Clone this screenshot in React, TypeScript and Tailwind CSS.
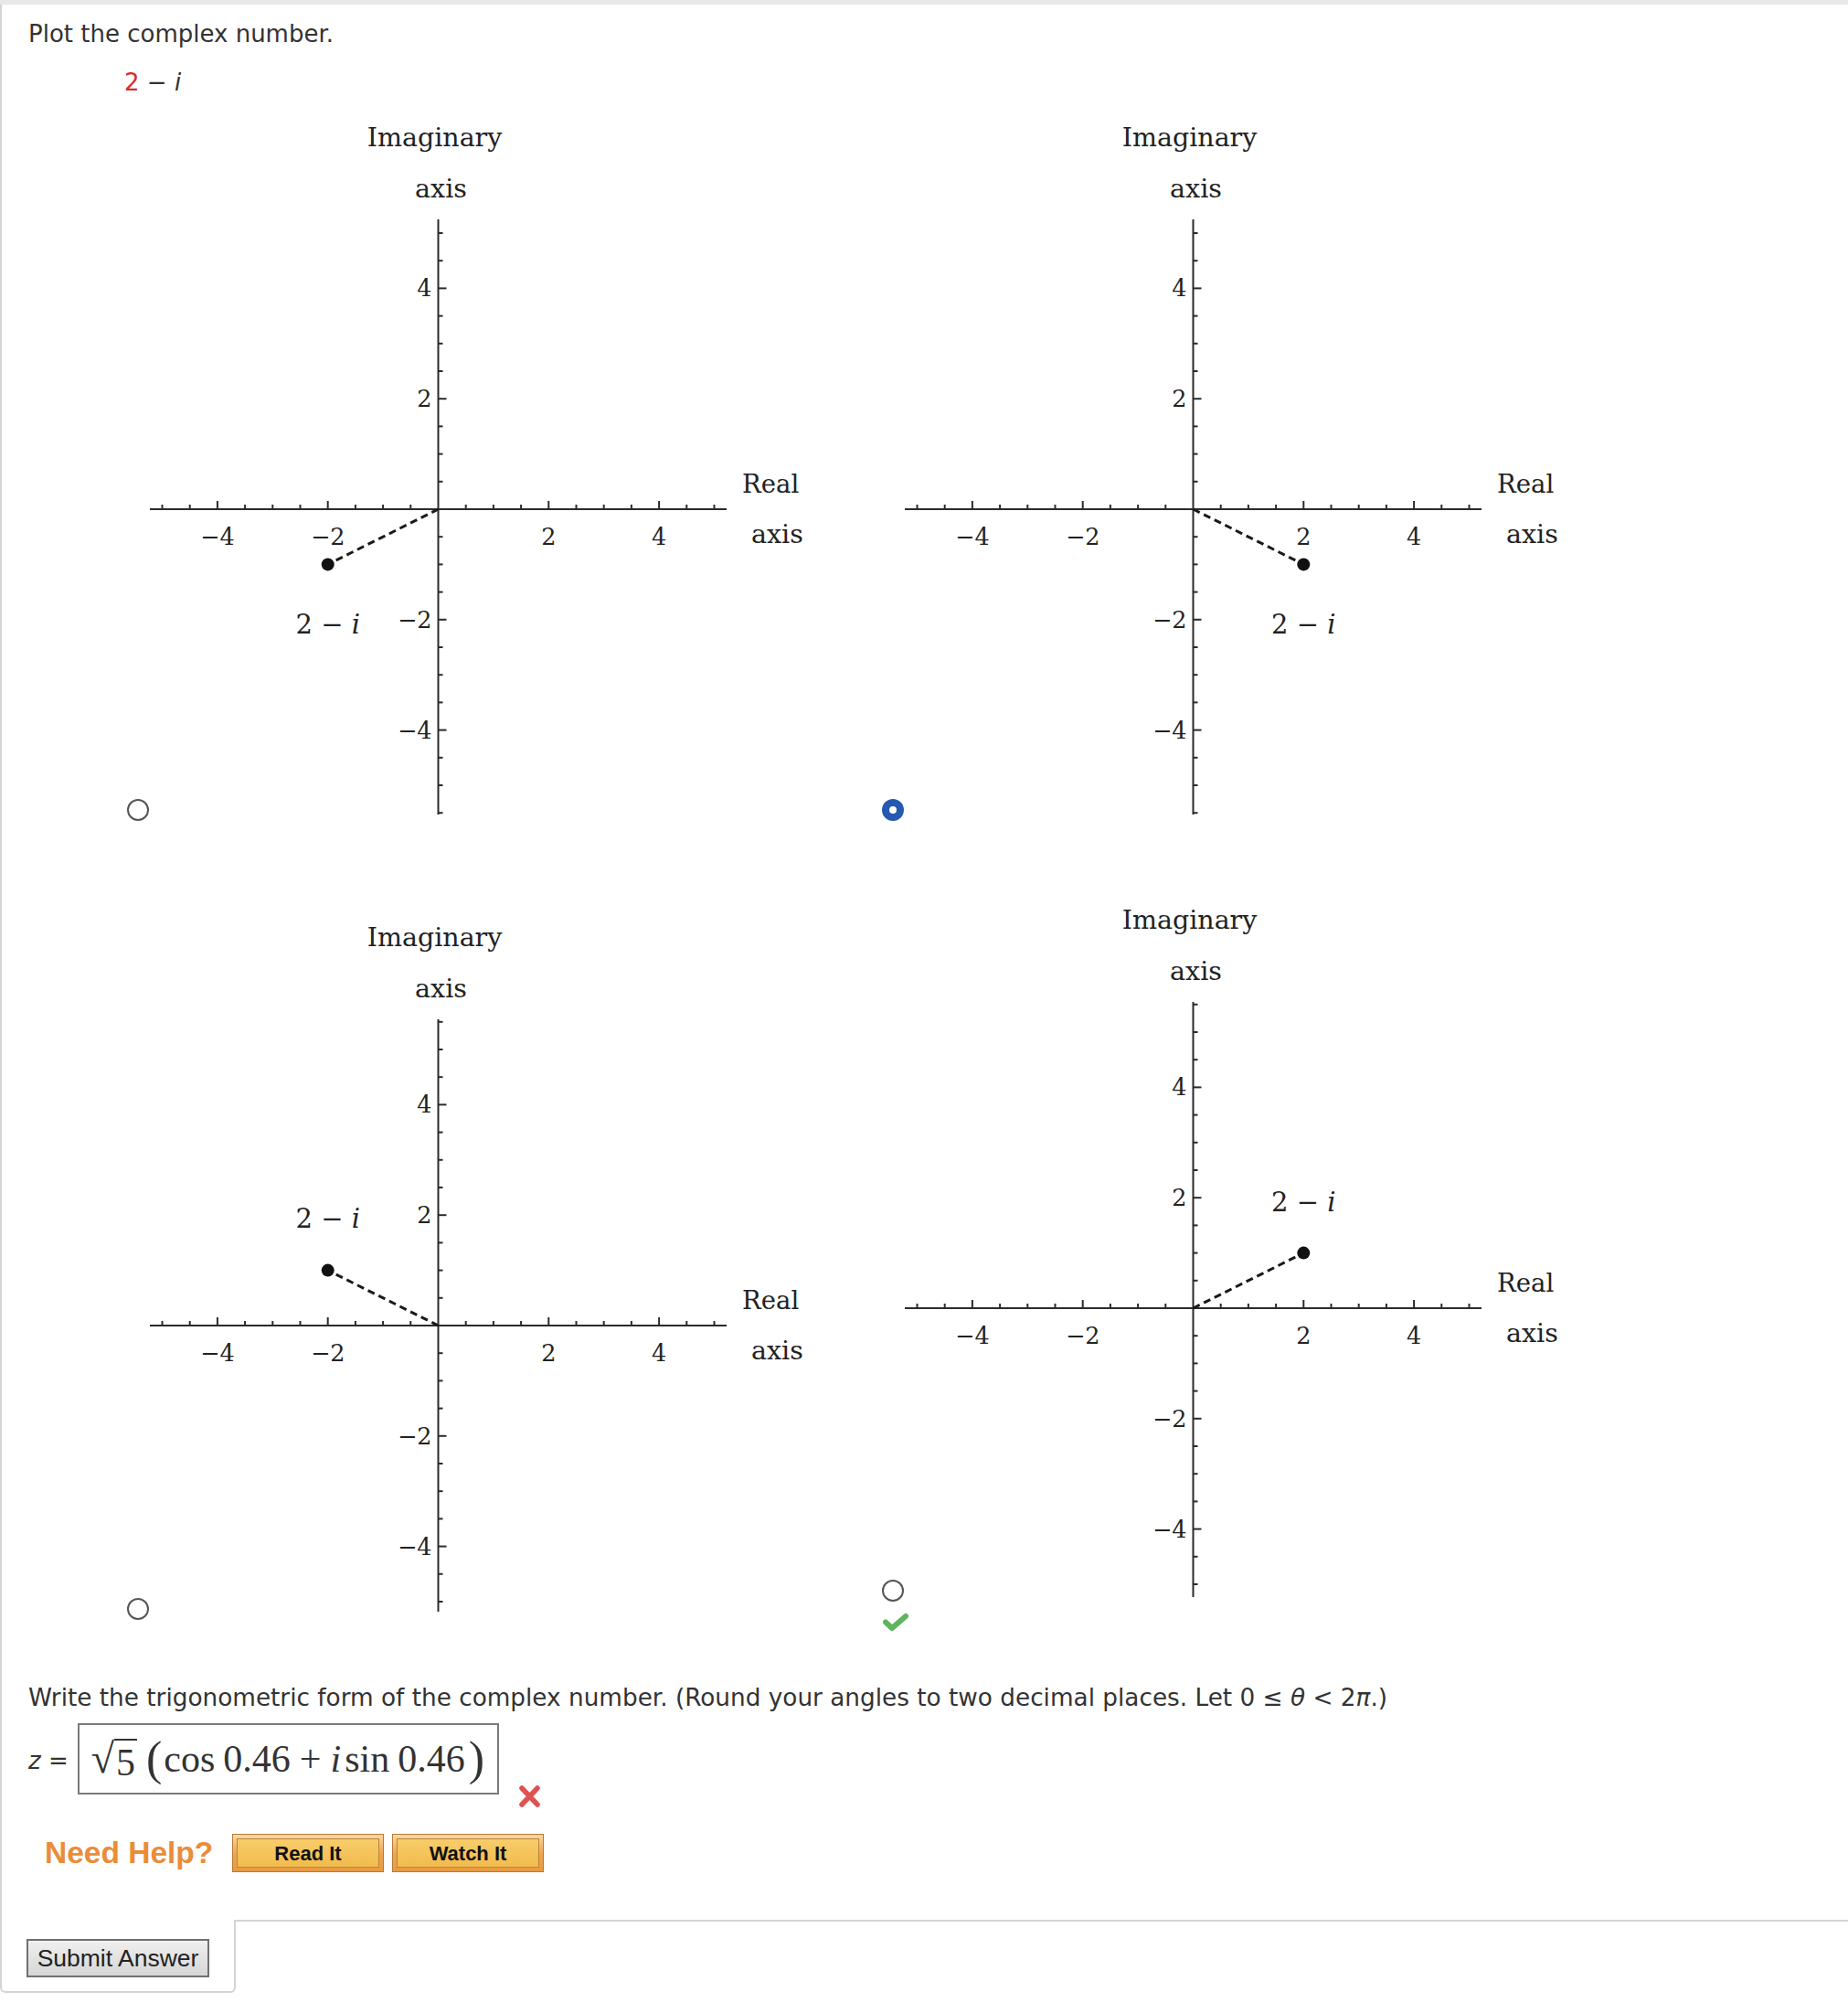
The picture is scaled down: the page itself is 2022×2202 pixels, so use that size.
import React from 'react';

const U = 60.4;

type GraphProps = {
  w: number;
  h: number;
  ox: number;
  oy: number;
  up: number;
  down: number;
  pt: [number, number];
  labelDy: number;
};

const fmt = (v: number) => (v < 0 ? `\u2212${-v}` : `${v}`);

function Graph({ w, h, ox, oy, up, down, pt, labelDy }: GraphProps) {
  const ticks: React.ReactNode[] = [];
  for (let k = -10; k <= 10; k++) {
    if (k === 0) continue;
    const x = ox + (k * U) / 2;
    const len = k % 4 === 0 ? 9 : 5;
    ticks.push(<line key={'x' + k} x1={x} x2={x} y1={oy} y2={oy - len} />);
  }
  for (let k = -12; k <= 12; k++) {
    if (k === 0) continue;
    const y = oy - (k * U) / 2;
    if (y < oy - up + 2 || y > oy + down - 1) continue;
    const len = k % 4 === 0 ? 9 : 5;
    ticks.push(<line key={'y' + k} x1={ox} x2={ox + len} y1={y} y2={y} />);
  }
  const X = ox + pt[0] * U;
  const Y = oy - pt[1] * U;
  const marks = [-4, -2, 2, 4];

  return (
    <svg width={w} height={h} viewBox={`0 0 ${w} ${h}`} className="block shrink-0">
      <g stroke="#2b2b2b" strokeWidth={2}>
        <line x1={ox - 315.5} x2={ox + 315.5} y1={oy} y2={oy} />
        <line x1={ox} x2={ox} y1={oy - up} y2={oy + down} />
        {ticks}
      </g>
      <line x1={ox} y1={oy} x2={X} y2={Y} stroke="#1a1a1a" strokeWidth={3} strokeDasharray="8 5" />
      <circle cx={X} cy={Y} r={7} fill="#111" />
      <g fontFamily="'DejaVu Serif', serif" fill="#222">
        <text x={ox - 4} y={oy - up - 80} fontSize={28.5} textAnchor="middle">Imaginary</text>
        <text x={ox + 3} y={oy - up - 24} fontSize={28.5} textAnchor="middle">axis</text>
        <text x={ox + 332.5} y={oy - 18} fontSize={27.5}>Real</text>
        <text x={ox + 342.5} y={oy + 37} fontSize={28.5}>axis</text>
        {marks.map((v) => (
          <text key={'lx' + v} x={ox + v * U} y={oy + 39} fontSize={25.5} textAnchor="middle">
            {fmt(v)}
          </text>
        ))}
        {marks.map((v) => (
          <text key={'ly' + v} x={ox - 7} y={oy - v * U + 9} fontSize={25.5} textAnchor="end">
            {fmt(v)}
          </text>
        ))}
        <text x={X} y={Y + labelDy} fontSize={29} textAnchor="middle">
          2 {'\u2212'} <tspan fontStyle="italic">i</tspan>
        </text>
      </g>
    </svg>
  );
}

function Radio({ checked = false }: { checked?: boolean }) {
  if (checked) {
    return (
      <span className="flex h-6 w-6 items-center justify-center rounded-full bg-[#2659b0]">
        <span className="h-2 w-2 rounded-full bg-white" />
      </span>
    );
  }
  return <span className="block h-6 w-6 rounded-full border-[2.5px] border-[#555] bg-white" />;
}

function HelpButton({ label }: { label: string }) {
  return (
    <button className="h-[42px] w-[166px] border border-[#b67a37] bg-linear-to-b from-[#fbd9a0] via-[#eea650] to-[#e99a40] p-[4px]">
      <span className="flex h-full w-full items-center justify-center border border-[#b98640] bg-linear-to-b from-[#f7cd6a] to-[#f2bb4c] font-['Liberation_Sans',sans-serif] text-[22px] font-bold text-[#111]">
        {label}
      </span>
    </button>
  );
}

export default function App() {
  return (
    <div className="min-h-screen bg-white font-['DejaVu_Sans',sans-serif] text-[#333]">
      <div className="border-t-[5px] border-[#e8e8e8]">
        <div className="border-l-2 border-[#d4d4d4] pb-[48px] pl-[29px] pt-[17px]">
          <p className="text-[26px] leading-[30px]">Plot the complex number.</p>
          <p className="mt-[23px] pl-[105px] text-[26px] leading-[30px]">
            <span className="text-[#d3302b]">2</span> {'\u2212'} <i>i</i>
          </p>

          {/* answer choices */}
          <div className="ml-[108px] mt-[5px] grid grid-cols-[826px_826px] items-start gap-y-[77px]">
            <div className="flex items-end">
              <div className="w-6 shrink-0">
                <Radio />
              </div>
              <Graph w={740} h={788} ox={316.5} oy={447} up={317} down={334} pt={[-2, -1]} labelDy={76} />
            </div>
            <div className="flex items-end">
              <div className="w-6 shrink-0">
                <Radio checked />
              </div>
              <Graph w={740} h={788} ox={316.5} oy={447} up={317} down={334} pt={[2, -1]} labelDy={76} />
            </div>
            <div className="flex items-end">
              <div className="w-6 shrink-0">
                <Radio />
              </div>
              <Graph w={740} h={797} ox={316.5} oy={475} up={335} down={313} pt={[-2, 1]} labelDy={-47} />
            </div>
            <div className="flex items-end">
              <div className="flex w-6 shrink-0 flex-col">
                <Radio />
                <svg width="30" height="21" viewBox="0 0 30 21" className="mt-[12px] block">
                  <path d="M4 10.5 L11 17 L26 4" fill="none" stroke="#5fb55f" strokeWidth="6" strokeLinecap="round" strokeLinejoin="round" />
                </svg>
              </div>
              <Graph w={740} h={810} ox={316.5} oy={456} up={335} down={316} pt={[2, 1]} labelDy={-46} />
            </div>
          </div>

          <p className="mt-[57px] text-[26.3px] leading-[30px]">
            Write the trigonometric form of the complex number. (Round your angles to two decimal places. Let 0 ≤ <i>θ</i> &lt; 2<i>π</i>.)
          </p>

          <div className="mt-[13px] flex items-start">
            <span className="flex h-[78px] items-center pt-[4px] text-[26px]">
              <i>z</i>&nbsp;=
            </span>
            <div className="ml-[10px] flex h-[78px] w-[461px] items-center border-2 border-[#7a7a7a] pl-[13px] font-['Liberation_Serif',serif] text-[42px] leading-none text-[#333]">
              <span className="text-[46px]">√</span>
              <span className="mt-[2px] border-t-2 border-[#333] px-[2px] pt-[3px]">5</span>
              <span className="ml-[10px] text-[52px]">(</span>
              <span className="ml-[2px]">cos</span>
              <span className="ml-[9px]">0.46</span>
              <span className="mx-[10px]">+</span>
              <i>i</i>
              <span className="ml-[4px]">sin</span>
              <span className="ml-[9px]">0.46</span>
              <span className="ml-[4px] text-[52px]">)</span>
            </div>
            <svg width="27" height="26" viewBox="0 0 27 26" className="ml-[20px] mt-[67px] block">
              <path d="M5 4 L22 22 M22 4 L5 22" stroke="#df5252" strokeWidth="5.5" strokeLinecap="round" />
            </svg>
          </div>

          <div className="mt-[24px] flex items-center">
            <span className="ml-[18px] w-[205px] font-['Liberation_Sans',sans-serif] text-[33.5px] font-bold text-[#eb8c38]">
              Need Help?
            </span>
            <div className="flex gap-[9px]">
              <HelpButton label="Read It" />
              <HelpButton label="Watch It" />
            </div>
          </div>
        </div>

        <div className="flex">
          <div className="h-[80px] w-[258px] rounded-b-md border-b-2 border-l-2 border-r-2 border-[#d4d4d4] pl-[27px] pt-[21px]">
            <button className="h-[42px] w-[200px] border-2 border-[#707070] bg-linear-to-b from-[#f0f0f0] to-[#d6d6d6] font-['Liberation_Sans',sans-serif] text-[26.5px] text-[#222]">
              Submit Answer
            </button>
          </div>
          <div className="flex-1 border-t-2 border-[#d4d4d4]" />
        </div>
      </div>
    </div>
  );
}
